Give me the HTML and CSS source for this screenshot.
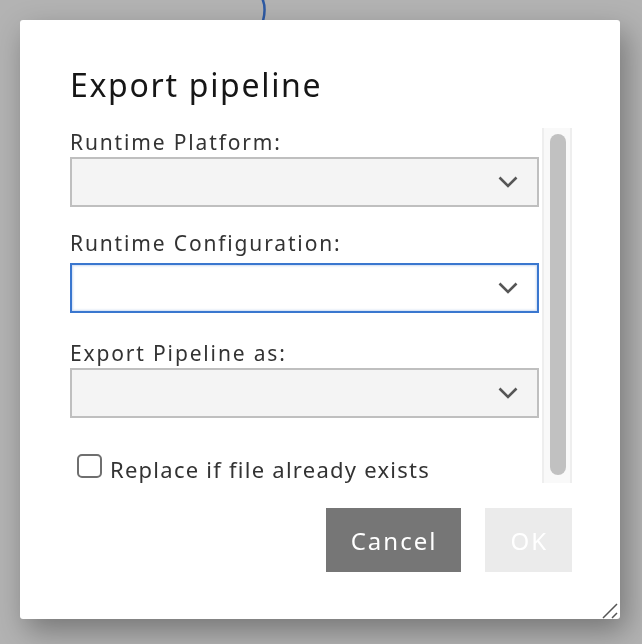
FILE: index.html
```html
<!DOCTYPE html>
<html lang="en">

<head>
  <meta charset="UTF-8">
  <meta name="viewport" content="width=device-width, initial-scale=1.0">
  <title>Export pipeline</title>
  <link rel="stylesheet" href="styles.css">
</head>

<body>
  <!-- Lienzo del editor, queda detrás del diálogo -->
  <div class="canvas">
    <svg class="canvas-link" width="20" height="34" viewBox="0 0 20 34">
      <path d="M10 -2 C14 6 14 16 7 32" />
    </svg>
  </div>

  <div class="overlay">
    <div class="dialog" role="dialog" aria-labelledby="dialog-title">
      <h2 id="dialog-title" class="dialog-title">Export pipeline</h2>

      <div class="dialog-body">
        <form class="export-form">
          <div class="field">
            <label class="field-label">Runtime Platform:</label>
            <div class="dropdown" tabindex="0">
              <svg class="chevron" width="20" height="12" viewBox="0 0 20 12">
                <path d="M1.5 1.5 L10 10 L18.5 1.5" />
              </svg>
            </div>
          </div>

          <div class="field">
            <label class="field-label">Runtime Configuration:</label>
            <div class="dropdown is-focused" tabindex="0">
              <svg class="chevron" width="20" height="12" viewBox="0 0 20 12">
                <path d="M1.5 1.5 L10 10 L18.5 1.5" />
              </svg>
            </div>
          </div>

          <div class="field">
            <label class="field-label">Export Pipeline as:</label>
            <div class="dropdown" tabindex="0">
              <svg class="chevron" width="20" height="12" viewBox="0 0 20 12">
                <path d="M1.5 1.5 L10 10 L18.5 1.5" />
              </svg>
            </div>
          </div>

          <label class="checkbox">
            <input type="checkbox">
            <span>Replace if file already exists</span>
          </label>
        </form>

        <!-- Barra de desplazamiento del formulario -->
        <div class="scrollbar">
          <div class="scrollbar-thumb"></div>
        </div>
      </div>

      <div class="dialog-footer">
        <button type="button" class="btn btn-secondary">Cancel</button>
        <button type="button" class="btn btn-primary" disabled>OK</button>
      </div>

      <!-- Asa para redimensionar -->
      <svg class="resize-handle" width="16" height="16" viewBox="0 0 16 16">
        <path d="M1 15 L15 1 M10 15 L15 10" />
      </svg>
    </div>
  </div>
</body>

</html>
```

FILE: styles.css
```css
/* RESETEO */
* {
  margin: 0;
  padding: 0;
}

*,
*::before,
*::after {
  box-sizing: border-box;
}

input,
button {
  font: inherit;
}

/* Página */
body {
  font-family: "Noto Sans", "Open Sans", sans-serif;
  background: #b3b3b3;
  width: 642px;
  height: 644px;
  overflow: hidden;
}

.canvas-link {
  position: absolute;
  left: 252px;
  top: 0;
  fill: none;
  stroke: #2d5aa4;
  stroke-width: 2.5;
}

/* Capa del modal */
.overlay {
  position: fixed;
  inset: 0;
  display: flex;
  align-items: flex-start;
  padding: 20px;
}

.dialog {
  position: relative;
  width: 600px;
  height: 599px;
  background: #fff;
  border-radius: 3px;
  box-shadow: 6px 12px 30px rgba(0, 0, 0, 0.34);
  padding: 45px 48px 47px 50px;
  display: flex;
  flex-direction: column;
}

.dialog-title {
  font-size: 32px;
  font-weight: 400;
  line-height: 40px;
  letter-spacing: 1.7px;
  color: #161616;
  margin-bottom: 23px;
}

/* Cuerpo con el formulario y su barra */
.dialog-body {
  height: 355px;
  display: flex;
  gap: 3px;
}

.export-form {
  width: 469px;
  display: flex;
  flex-direction: column;
  gap: 22px;
}

.field {
  display: flex;
  flex-direction: column;
}

.field-label {
  font-size: 21px;
  line-height: 28px;
  letter-spacing: 1.85px;
  color: #333;
}

.dropdown {
  height: 50px;
  margin-top: 1px;
  background: #f4f4f4;
  border: 2px solid #bfbfbf;
  display: flex;
  align-items: center;
  justify-content: flex-end;
  padding-right: 19px;

  &.is-focused {
    margin: 6px 0 4px;
    background: #fff;
    border-color: #3a77cf;
    box-shadow: inset 0 0 2px 1px rgba(58, 119, 207, 0.25);
    outline: none;
  }
}

.chevron {
  fill: none;
  stroke: #565656;
  stroke-width: 2.6;
}

.checkbox {
  display: flex;
  align-items: flex-start;
  gap: 8px;
  margin-top: 14px;
  padding-left: 7px;
  font-size: 22px;
  letter-spacing: 1.25px;
  color: #333;

  input {
    appearance: none;
    width: 25px;
    height: 24px;
    border: 2px solid #6f6f6f;
    border-radius: 5px;
    background: #fff;
  }

  span {
    line-height: 24px;
    margin-top: 3px;
  }
}

.scrollbar {
  width: 30px;
  background: #f9f9f9;
  border-left: 2px solid #eee;
  border-right: 2px solid #eee;
  padding: 6px 4px 8px 6px;
  display: flex;
}

.scrollbar-thumb {
  flex: 1;
  background: #c1c1c1;
  border-radius: 8px;
}

/* Botones */
.dialog-footer {
  margin-top: 25px;
  display: flex;
  justify-content: flex-end;
  gap: 24px;
}

.btn {
  height: 64px;
  padding: 0 24px 0 25px;
  border: none;
  font-size: 24px;
  letter-spacing: 2px;
  color: #fff;
  cursor: pointer;
}

.btn-secondary {
  background: #767676;
}

.btn-primary {
  background: #ebebeb;

  &:disabled {
    cursor: not-allowed;
  }
}

.resize-handle {
  position: absolute;
  right: 2px;
  bottom: 0;
  fill: none;
  stroke: #555;
  stroke-width: 1.5;
}
```
